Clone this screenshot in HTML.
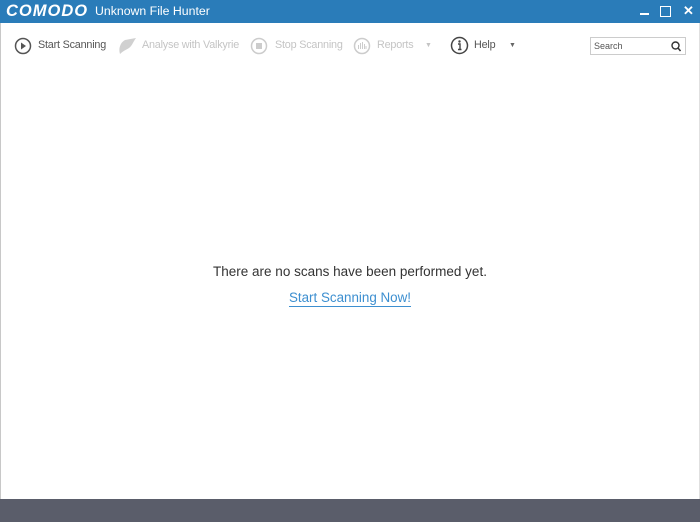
<!DOCTYPE html>
<html><head><style>
*{margin:0;padding:0;box-sizing:border-box}
body{width:700px;height:522px;position:relative;background:#fff;font-family:"Liberation Sans",sans-serif;overflow:hidden}
.title{position:absolute;left:0;top:0;width:700px;height:23px;background:#2a7cb9;color:#fff}
.logo{position:absolute;left:6px;top:2px;font-size:16.5px;font-weight:bold;font-style:italic;letter-spacing:1px}
.app{position:absolute;left:95px;top:4px;font-size:12.3px}
.lb{position:absolute;left:0;top:23px;width:1px;height:476px;background:#c8c8c8}
.rb{position:absolute;right:0;top:23px;width:1px;height:476px;background:#e0e0e0}
.tb{position:absolute;top:39px;font-size:10.8px;color:#555;letter-spacing:-0.2px;white-space:nowrap}
.dis{color:#c4c4c4}
.foot{position:absolute;left:0;top:499px;width:700px;height:23px;background:#5a5d6a}
.msg{position:absolute;left:0;width:700px;text-align:center}
</style></head><body>
<div class="title"><span class="logo">COMODO</span><span class="app">Unknown File Hunter</span>
<div style="position:absolute;left:640px;top:13px;width:9px;height:2px;background:#fff"></div>
<div style="position:absolute;left:660px;top:6px;width:11px;height:11px;border:1.5px solid #fff"></div>
<div style="position:absolute;left:683px;top:3px;font-size:13px;font-weight:bold">✕</div>
</div>
<div class="lb"></div><div class="rb"></div>
<svg style="position:absolute;left:14px;top:37px" width="18" height="18"><circle cx="9" cy="9" r="7.5" fill="none" stroke="#555" stroke-width="1.5"/><path d="M7 5.5L12 9L7 12.5Z" fill="#555"/></svg>
<span class="tb" style="left:38px">Start Scanning</span>
<svg style="position:absolute;left:117px;top:37px" width="20" height="18"><path d="M3 17C1 11 4 5 8 3L19 1C16 5 15 9 12 11C9 13 6 14 3 17Z" fill="#d0d0d0"/></svg>
<span class="tb dis" style="left:142px">Analyse with Valkyrie</span>
<svg style="position:absolute;left:250px;top:37px" width="18" height="18"><circle cx="9" cy="9" r="7.5" fill="none" stroke="#ccc" stroke-width="1.5"/><rect x="6" y="6" width="6" height="6" fill="#ccc"/></svg>
<span class="tb dis" style="left:275px">Stop Scanning</span>
<svg style="position:absolute;left:353px;top:37px" width="18" height="18"><circle cx="9" cy="9" r="7.5" fill="none" stroke="#ccc" stroke-width="1.5"/><path d="M5.5 12V8M7.5 12V6M9.5 12V5M11.5 12V7M13 12V9" stroke="#ccc" stroke-width="1"/></svg>
<span class="tb dis" style="left:377px">Reports</span>
<span class="tb dis" style="left:425px;font-size:7px;top:42px">▼</span>
<svg style="position:absolute;left:450px;top:36px" width="19" height="19"><circle cx="9.5" cy="9.5" r="8" fill="none" stroke="#444" stroke-width="1.5"/><circle cx="9.5" cy="5.5" r="1.2" fill="#444"/><path d="M8 8H10V13.5M8 13.5H11.5" stroke="#444" stroke-width="1.4" fill="none"/></svg>
<span class="tb" style="left:474px">Help</span>
<span class="tb" style="left:509px;font-size:7px;top:42px;color:#666">▼</span>
<div style="position:absolute;left:590px;top:37px;width:96px;height:18px;border:1px solid #ccc;font-size:9px;color:#555;padding:3px 0 0 3px">Search
<svg style="position:absolute;right:4px;top:3px" width="10" height="11"><circle cx="4.5" cy="4.5" r="3.5" fill="none" stroke="#333" stroke-width="1.4"/><path d="M7 7L9.5 10" stroke="#333" stroke-width="1.5"/></svg></div>
<div class="msg" style="top:264px;font-size:13.5px;color:#333">There are no scans have been performed yet.</div>
<div class="msg" style="top:290px;font-size:13.4px"><span style="color:#3d8fd0;border-bottom:1px solid #3d8fd0;padding-bottom:1px">Start Scanning Now!</span></div>
<div class="foot"></div>
</body></html>
